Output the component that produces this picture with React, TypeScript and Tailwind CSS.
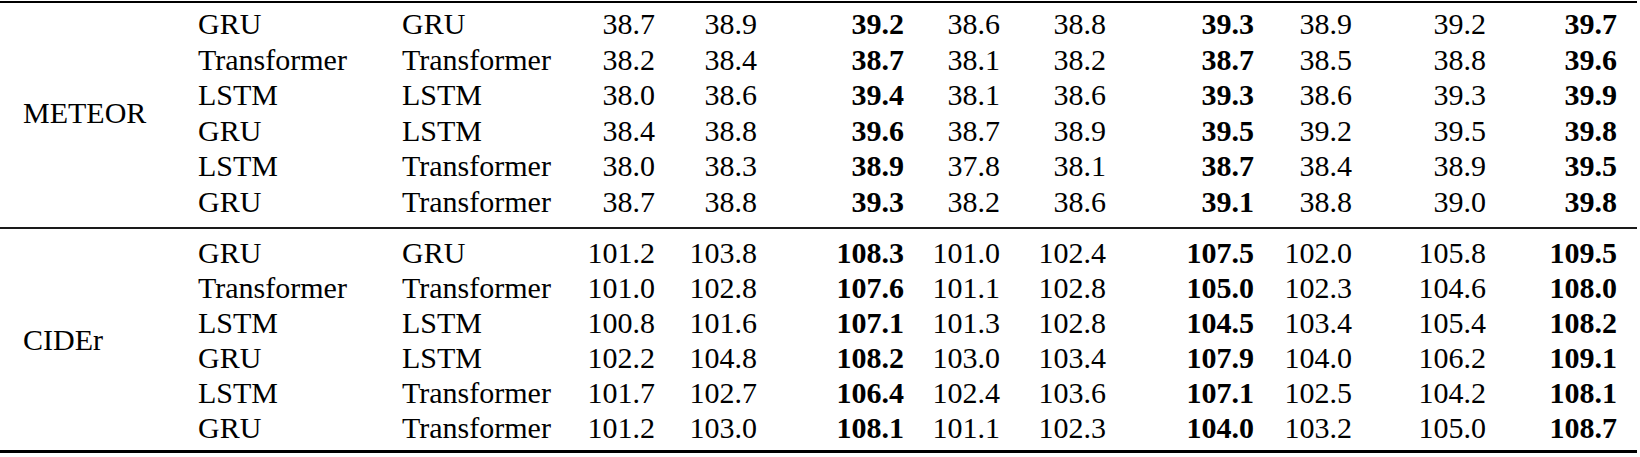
import React from 'react';

type Row = { enc: string; dec: string; vals: string[] };

const meteor: Row[] = [
  { enc: 'GRU', dec: 'GRU', vals: ['38.7', '38.9', '39.2', '38.6', '38.8', '39.3', '38.9', '39.2', '39.7'] },
  { enc: 'Transformer', dec: 'Transformer', vals: ['38.2', '38.4', '38.7', '38.1', '38.2', '38.7', '38.5', '38.8', '39.6'] },
  { enc: 'LSTM', dec: 'LSTM', vals: ['38.0', '38.6', '39.4', '38.1', '38.6', '39.3', '38.6', '39.3', '39.9'] },
  { enc: 'GRU', dec: 'LSTM', vals: ['38.4', '38.8', '39.6', '38.7', '38.9', '39.5', '39.2', '39.5', '39.8'] },
  { enc: 'LSTM', dec: 'Transformer', vals: ['38.0', '38.3', '38.9', '37.8', '38.1', '38.7', '38.4', '38.9', '39.5'] },
  { enc: 'GRU', dec: 'Transformer', vals: ['38.7', '38.8', '39.3', '38.2', '38.6', '39.1', '38.8', '39.0', '39.8'] },
];

const cider: Row[] = [
  { enc: 'GRU', dec: 'GRU', vals: ['101.2', '103.8', '108.3', '101.0', '102.4', '107.5', '102.0', '105.8', '109.5'] },
  { enc: 'Transformer', dec: 'Transformer', vals: ['101.0', '102.8', '107.6', '101.1', '102.8', '105.0', '102.3', '104.6', '108.0'] },
  { enc: 'LSTM', dec: 'LSTM', vals: ['100.8', '101.6', '107.1', '101.3', '102.8', '104.5', '103.4', '105.4', '108.2'] },
  { enc: 'GRU', dec: 'LSTM', vals: ['102.2', '104.8', '108.2', '103.0', '103.4', '107.9', '104.0', '106.2', '109.1'] },
  { enc: 'LSTM', dec: 'Transformer', vals: ['101.7', '102.7', '106.4', '102.4', '103.6', '107.1', '102.5', '104.2', '108.1'] },
  { enc: 'GRU', dec: 'Transformer', vals: ['101.2', '103.0', '108.1', '101.1', '102.3', '104.0', '103.2', '105.0', '108.7'] },
];

// every third score column is the best of its group
const isBold = (i: number) => i % 3 === 2;

const Block = ({ label, rows, rowH }: { label: string; rows: Row[]; rowH: string }) => (
  <div
    className={`grid grid-cols-[198px_204px_158px_95px_102px_147px_96px_106px_148px_98px_134px_131px] ${rowH}`}
  >
    <div className="row-span-6 col-start-1 row-start-1 flex items-center pl-[23px]">{label}</div>
    {rows.map((r, ri) => (
      <React.Fragment key={ri}>
        <div className="col-start-2" style={{ gridRowStart: ri + 1 }}>{r.enc}</div>
        <div className="col-start-3" style={{ gridRowStart: ri + 1 }}>{r.dec}</div>
        {r.vals.map((v, vi) => (
          <div
            key={vi}
            className={isBold(vi) ? 'text-right font-bold' : 'text-right'}
            style={{ gridRowStart: ri + 1, gridColumnStart: vi + 4 }}
          >
            {v}
          </div>
        ))}
      </React.Fragment>
    ))}
  </div>
);

export default function App() {
  return (
    <div className="bg-white w-[1640px] h-[457px] pt-[1px] text-black text-[30px] font-['Liberation_Serif','Times_New_Roman',serif]">
      <div className="w-[1637px]">
        <div className="h-[2px] bg-black" />
        <div className="pt-[3px] pb-[7.5px]">
          <Block label="METEOR" rows={meteor} rowH="auto-rows-[35.5px] leading-[35.5px]" />
        </div>
        <div className="h-[2px] bg-[#1a1a1a]" />
        <div className="pt-[6px] pb-[4.5px]">
          <Block label="CIDEr" rows={cider} rowH="auto-rows-[35.2px] leading-[35.2px]" />
        </div>
        <div className="h-[3px] bg-black" />
      </div>
    </div>
  );
}
